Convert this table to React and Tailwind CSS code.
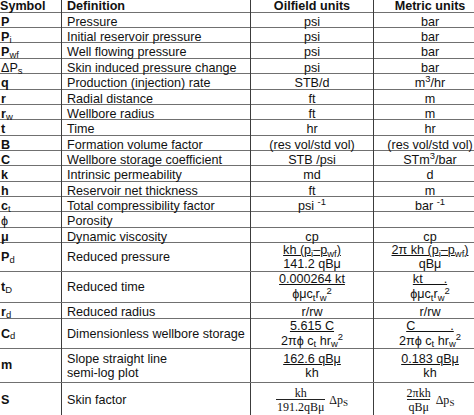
import React from "react";

const GRID = "grid grid-cols-[62px_189px_123px_112px] border-b border-[#707070]";
const VLINE = "border-r border-[#3c3c3c]";

function Row({ h, sym, def, oil, met, symNormal }) {
    return (
        <div className={`${GRID} ${h}`}>
            <div className={`${VLINE} flex items-center pl-[1px] ${symNormal ? "font-normal" : "font-bold"}`}>
                {sym}
            </div>
            <div className={`${VLINE} flex items-center pl-[5px]`}>{def}</div>
            <div className={`${VLINE} flex flex-col items-center justify-center text-center`}>{oil}</div>
            <div className="flex flex-col items-center justify-center text-center whitespace-nowrap">{met}</div>
        </div>
    );
}

// stacked "fraction" as typed in the original doc: underlined top line, plain bottom line
function Frac({ top, bot, tall }) {
    return (
        <div className="flex flex-col items-center leading-[14px]">
            <span className="underline decoration-1 underline-offset-[1px] whitespace-pre">{top}</span>
            <span className={`whitespace-pre ${tall ? "leading-[16px]" : ""}`}>{bot}</span>
        </div>
    );
}

function SerifFrac({ top, bot }) {
    return (
        <div className="flex items-center gap-[4px] font-['Liberation_Serif','Times_New_Roman',serif] text-[12px] -mt-[2px]">
            <div className="flex flex-col items-center leading-[12px]">
                <span className="px-[1px]">{top}</span>
                <span className="border-t border-[#222] px-[1px] pt-[1px]">{bot}</span>
            </div>
            <span>
                Δp<sub>S</sub>
            </span>
        </div>
    );
}

const S = ({ children }) => <sub className="font-normal">{children}</sub>;

const rows = [
    { sym: "P", def: "Pressure", oil: "psi", met: "bar" },
    { sym: <>P<S>i</S></>, def: "Initial reservoir pressure", oil: "psi", met: "bar" },
    { sym: <>P<S>wf</S></>, def: "Well flowing pressure", oil: "psi", met: "bar" },
    { sym: <>ΔP<sub>s</sub></>, symNormal: true, def: "Skin induced pressure change", oil: "psi", met: "bar" },
    { sym: "q", def: "Production (injection) rate", oil: "STB/d", met: <span>m<sup>3</sup>/hr</span> },
    { sym: "r", def: "Radial distance", oil: "ft", met: "m" },
    { sym: <>r<S>w</S></>, def: "Wellbore radius", oil: "ft", met: "m" },
    { sym: "t", def: "Time", oil: "hr", met: "hr" },
    { sym: "B", def: "Formation volume factor", oil: "(res vol/std vol)", met: "(res vol/std vol)" },
    { sym: "C", def: "Wellbore storage coefficient", oil: "STB /psi", met: <span>STm<sup>3</sup>/bar</span> },
    { sym: "k", def: "Intrinsic permeability", oil: "md", met: "d" },
    { sym: "h", def: "Reservoir net thickness", oil: "ft", met: "m" },
    {
        sym: <>c<S>t</S></>,
        def: "Total compressibility factor",
        oil: <span>psi <sup>-1</sup></span>,
        met: <span>bar <sup>-1</sup></span>,
    },
    { sym: "ϕ", symNormal: true, def: "Porosity", oil: "", met: "" },
    { sym: "μ", def: "Dynamic viscosity", oil: "cp", met: "cp" },
];

export default function App() {
    return (
        <div className="w-[474px] h-[415px] overflow-hidden bg-white font-['Liberation_Sans',Arial,sans-serif] text-[12.6px] text-[#111]">
            <div className="w-[486px] -mt-[2.7px]">
                {/* header */}
                <div className={`${GRID} h-[15.4px] font-bold`}>
                    <div className={`${VLINE} flex items-center`}>Symbol</div>
                    <div className={`${VLINE} flex items-center pl-[5px]`}>Definition</div>
                    <div className={`${VLINE} flex items-center justify-center`}>Oilfield units</div>
                    <div className="flex items-center justify-center">Metric units</div>
                </div>

                {rows.map((r, i) => (
                    <Row key={i} h="h-[15.37px]" {...r} />
                ))}

                <Row
                    h="h-[29.4px]"
                    sym={<>P<S>d</S></>}
                    def="Reduced pressure"
                    oil={<Frac top={<>kh (p<sub>i</sub>–p<sub>wf</sub>)</>} bot="141.2 qBμ" />}
                    met={<Frac top={<>2π kh (p<sub>i</sub>–p<sub>wf</sub>)</>} bot="qBμ" />}
                />
                <Row
                    h="h-[30.6px]"
                    sym={<>t<S>D</S></>}
                    def="Reduced time"
                    oil={<Frac tall top="0.000264 kt" bot={<>ϕμc<sub>t</sub>r<sub>w</sub><sup>2</sup></>} />}
                    met={<Frac tall top="kt      ." bot={<>ϕμc<sub>t</sub>r<sub>w</sub><sup>2</sup></>} />}
                />
                <Row h="h-[16px]" sym={<>r<S>d</S></>} def="Reduced radius" oil="r/rw" met="r/rw" />
                <Row
                    h="h-[30px]"
                    sym={<>C<S>d</S></>}
                    def="Dimensionless wellbore storage"
                    oil={<Frac tall top="5.615 C" bot={<>2πϕ c<sub>t</sub> hr<sub>w</sub><sup>2</sup></>} />}
                    met={<Frac tall top="C          ." bot={<>2πϕ c<sub>t</sub> hr<sub>w</sub><sup>2</sup></>} />}
                />
                <Row
                    h="h-[34px]"
                    sym="m"
                    def={
                        <div className="leading-[14px]">
                            Slope straight line
                            <br />
                            semi-log plot
                        </div>
                    }
                    oil={<Frac top="162.6 qBμ" bot="kh" />}
                    met={<Frac top="0.183 qBμ" bot="kh" />}
                />
                <Row
                    h="h-[36px]"
                    sym="S"
                    def="Skin factor"
                    oil={<SerifFrac top="kh" bot="191.2qBμ" />}
                    met={<SerifFrac top="2πkh" bot="qBμ" />}
                />
            </div>
        </div>
    );
}
